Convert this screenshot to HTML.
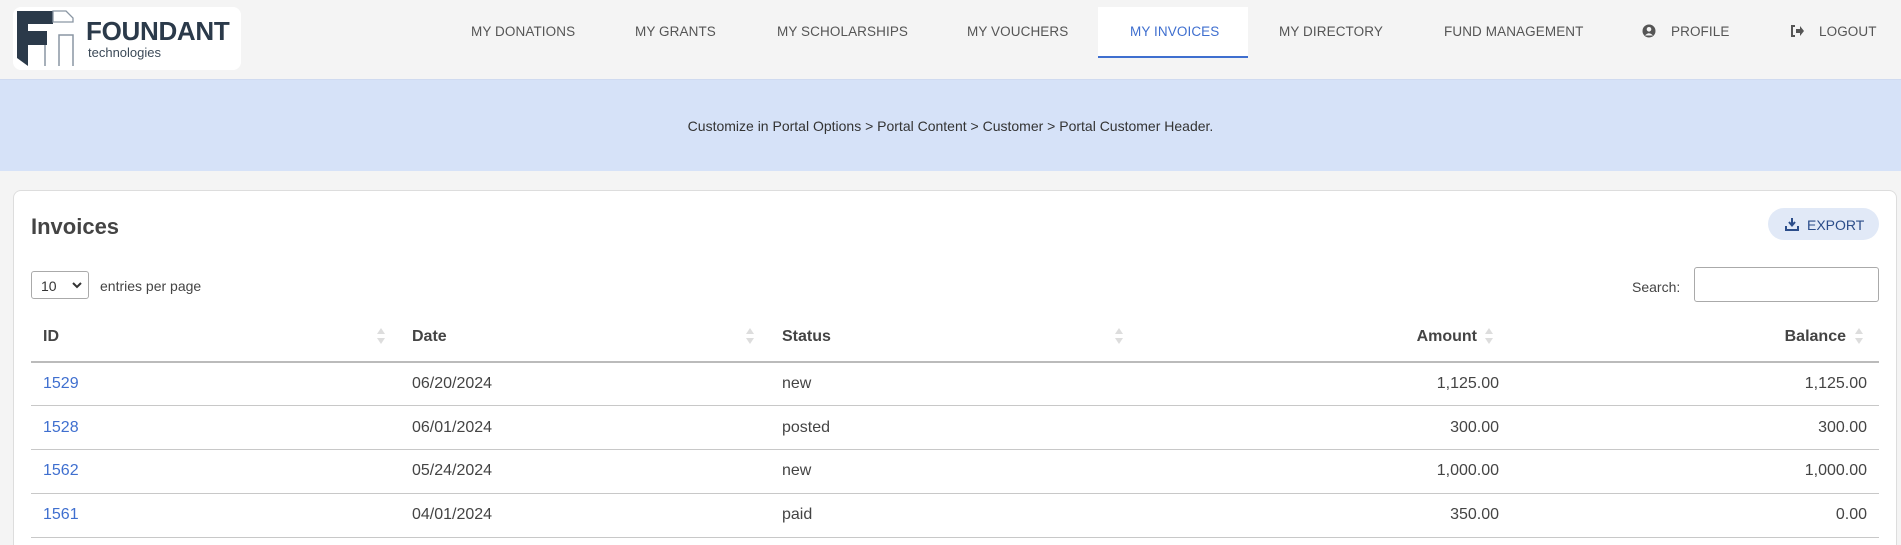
<!DOCTYPE html>
<html style="width:1901px;height:545px;overflow:hidden"><head><meta charset="utf-8"><style>
*{margin:0;padding:0;box-sizing:border-box}
body{width:1901px;height:545px;overflow:hidden;background:#f4f4f4;font-family:"Liberation Sans",Arial,sans-serif;color:#333;position:relative}
.a{position:absolute;white-space:nowrap}
.nav{font-size:13.5px;color:#555;top:24px;letter-spacing:0.1px}
.th{font-weight:bold;font-size:16px;color:#444;top:328px}
.td{font-size:16px;color:#444}
.ln{position:absolute;left:31px;width:1848px;height:1px;background:#c8c8c8}
.sort{position:absolute;width:8px;height:16px;top:328px}
.sort:before,.sort:after{content:"";position:absolute;left:0;border-left:4px solid transparent;border-right:4px solid transparent}
.sort:before{top:0;border-bottom:6px solid #ddd}
.sort:after{bottom:0;border-top:6px solid #ddd}
</style></head><body>
<div class="a" style="left:13px;top:7px;width:228px;height:63px;background:#fff;border-radius:8px"></div>
<svg class="a" style="left:0;top:0" width="80" height="70">
<path d="M17 11H53V24H28V31H47V45H28V66L17 58Z" fill="#2b3a4a"/>
<path d="M53 11H66L73 18V22H53Z" fill="none" stroke="#8a96a3" stroke-width="1.3"/>
<path d="M45 45V66M59 66V35H73V66" fill="none" stroke="#8a96a3" stroke-width="1.5"/>
</svg>
<div class="a" style="left:86px;top:16px;font-size:26px;font-weight:bold;color:#2b3a4a;letter-spacing:-0.3px">FOUNDANT</div>
<div class="a" style="left:88px;top:45px;font-size:13px;color:#3c4a58">technologies</div>
<div class="a nav" style="left:471px">MY DONATIONS</div>
<div class="a nav" style="left:635px">MY GRANTS</div>
<div class="a nav" style="left:777px">MY SCHOLARSHIPS</div>
<div class="a nav" style="left:967px">MY VOUCHERS</div>
<div class="a" style="left:1098px;top:7px;width:150px;height:51px;background:#fff;border-bottom:2px solid #3f6fcf"></div>
<div class="a nav" style="left:1130px;color:#3f6fcf">MY INVOICES</div>
<div class="a nav" style="left:1279px">MY DIRECTORY</div>
<div class="a nav" style="left:1444px">FUND MANAGEMENT</div>
<svg class="a" style="left:1642px;top:24px" width="14" height="14"><circle cx="7" cy="7" r="6.5" fill="#555"/><circle cx="7" cy="5.3" r="2.3" fill="#f4f4f4"/><path d="M3 11.5Q7 7 11 11.5" fill="#f4f4f4"/></svg>
<div class="a nav" style="left:1671px">PROFILE</div>
<svg class="a" style="left:1790px;top:24px" width="15" height="14"><path d="M5 2H2V12H5" fill="none" stroke="#555" stroke-width="2"/><path d="M6 5H10V2L14 7L10 12V9H6Z" fill="#555"/></svg>
<div class="a nav" style="left:1819px">LOGOUT</div>
<div class="a" style="left:0;top:79px;width:1901px;height:92px;background:#d6e2f8;border-top:1px solid #cfdaf0"></div>
<div class="a" style="left:0;top:118px;width:1901px;text-align:center;font-size:14px;color:#333">Customize in Portal Options &gt; Portal Content &gt; Customer &gt; Portal Customer Header.</div>
<div class="a" style="left:13px;top:190px;width:1884px;height:355px;background:#fff;border:1px solid #ddd;border-bottom:none;border-radius:8px 8px 0 0"></div>
<div class="a" style="left:31px;top:214px;font-size:22px;font-weight:bold;color:#444">Invoices</div>
<div class="a" style="left:1768px;top:208px;width:111px;height:32px;background:#e1e9f7;border-radius:16px"></div>
<svg class="a" style="left:1785px;top:218px" width="14" height="13"><path d="M7 0V7M4 4L7 7.5L10 4" fill="none" stroke="#2b4d8a" stroke-width="2"/><path d="M1 8V12H13V8" fill="none" stroke="#2b4d8a" stroke-width="2"/></svg>
<div class="a" style="left:1807px;top:217px;font-size:14px;color:#2b4d8a">EXPORT</div>
<div class="a" style="left:31px;top:271px;width:58px;height:28px;border:1px solid #aaa;border-radius:3px;background:#fff"></div>
<div class="a" style="left:41px;top:278px;font-size:14px;color:#333">10</div>
<svg class="a" style="left:72px;top:281px" width="10" height="8"><path d="M1 2L5 6L9 2" fill="none" stroke="#333" stroke-width="2"/></svg>
<div class="a" style="left:100px;top:278px;font-size:14px;color:#444">entries per page</div>
<div class="a" style="left:1632px;top:279px;font-size:14px;color:#444">Search:</div>
<div class="a" style="left:1694px;top:267px;width:185px;height:35px;border:1px solid #aaa;border-radius:3px"></div>
<div class="a th" style="left:43px">ID</div><div class="sort" style="left:377px"></div>
<div class="a th" style="left:412px">Date</div><div class="sort" style="left:746px"></div>
<div class="a th" style="left:782px">Status</div><div class="sort" style="left:1115px"></div>
<div class="a th" style="right:424px">Amount</div><div class="sort" style="left:1485px"></div>
<div class="a th" style="right:55px">Balance</div><div class="sort" style="left:1855px"></div>
<div class="ln" style="top:361px;height:2px;background:#bbb"></div>
<div class="a td" style="left:43px;top:375px;color:#3f6fcf">1529</div><div class="a td" style="left:412px;top:375px">06/20/2024</div><div class="a td" style="left:782px;top:375px">new</div><div class="a td" style="right:402px;top:375px">1,125.00</div><div class="a td" style="right:34px;top:375px">1,125.00</div>
<div class="ln" style="top:405px"></div>
<div class="a td" style="left:43px;top:419px;color:#3f6fcf">1528</div><div class="a td" style="left:412px;top:419px">06/01/2024</div><div class="a td" style="left:782px;top:419px">posted</div><div class="a td" style="right:402px;top:419px">300.00</div><div class="a td" style="right:34px;top:419px">300.00</div>
<div class="ln" style="top:449px"></div>
<div class="a td" style="left:43px;top:462px;color:#3f6fcf">1562</div><div class="a td" style="left:412px;top:462px">05/24/2024</div><div class="a td" style="left:782px;top:462px">new</div><div class="a td" style="right:402px;top:462px">1,000.00</div><div class="a td" style="right:34px;top:462px">1,000.00</div>
<div class="ln" style="top:493px"></div>
<div class="a td" style="left:43px;top:506px;color:#3f6fcf">1561</div><div class="a td" style="left:412px;top:506px">04/01/2024</div><div class="a td" style="left:782px;top:506px">paid</div><div class="a td" style="right:402px;top:506px">350.00</div><div class="a td" style="right:34px;top:506px">0.00</div>
<div class="ln" style="top:537px"></div>
</body></html>
